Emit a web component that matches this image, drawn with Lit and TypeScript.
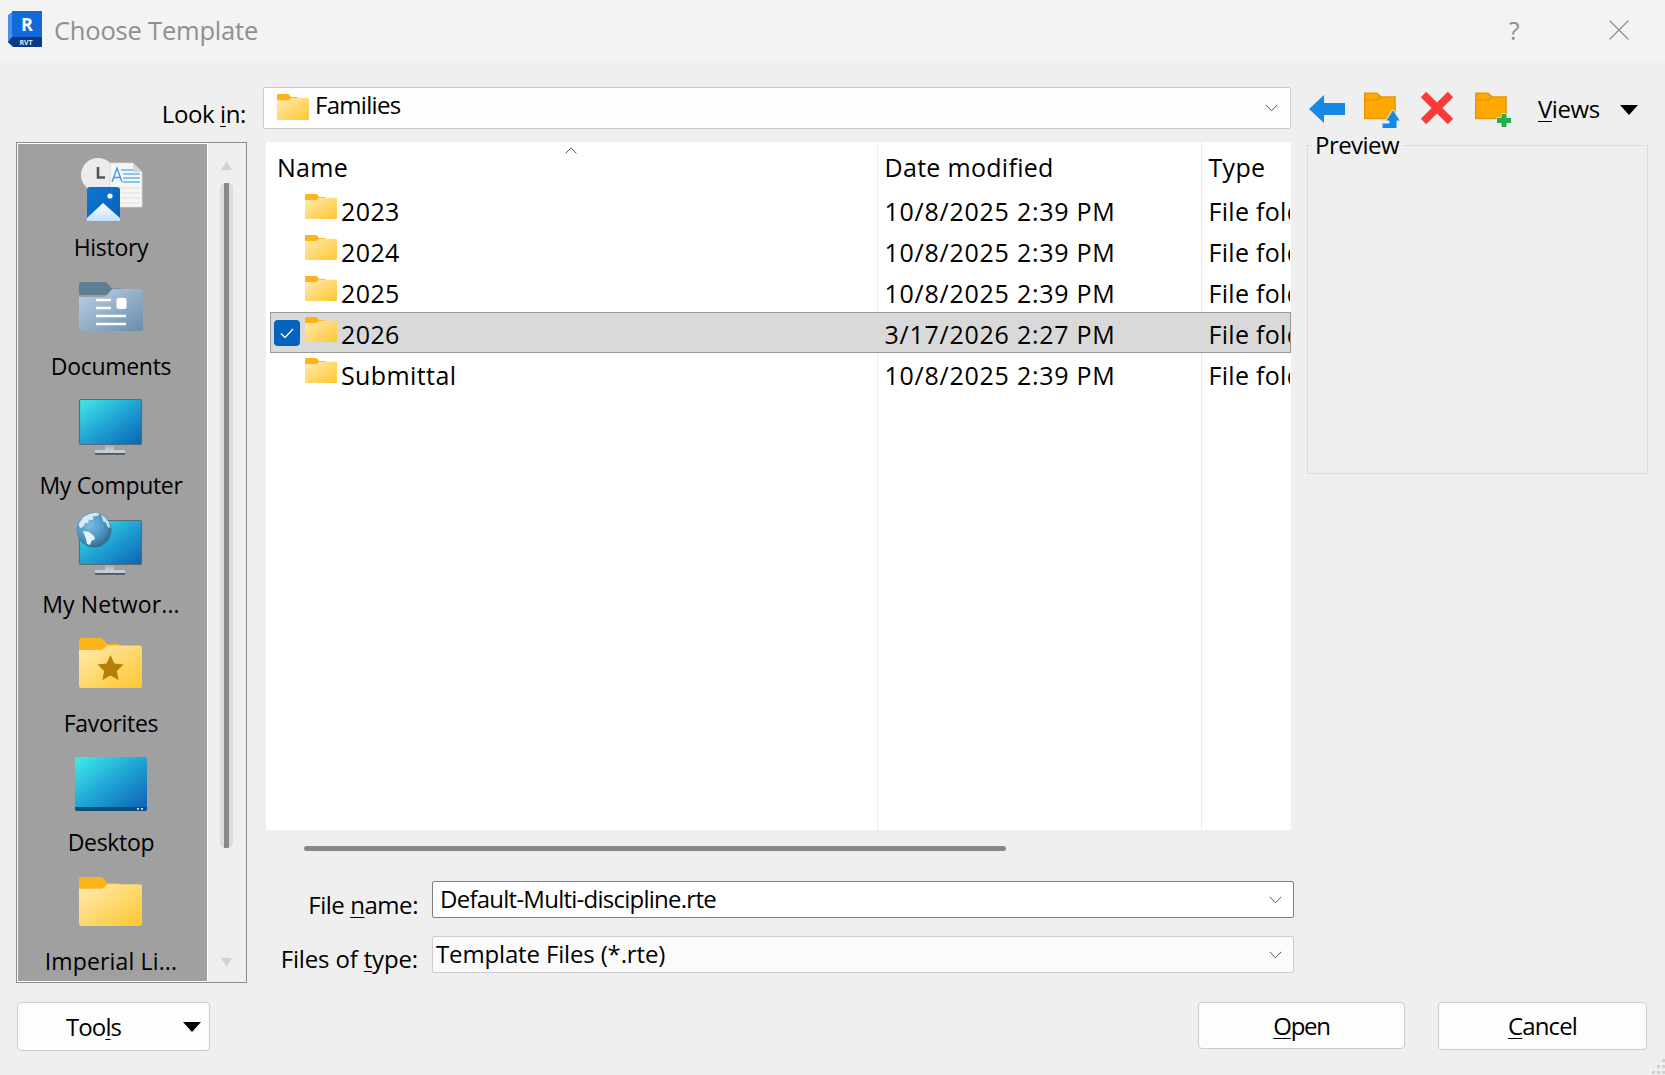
import { LitElement, html, css, svg } from "lit";
import { customElement } from "lit/decorators.js";

const folderShapes = (id: string) => svg`
  <defs>
    <linearGradient id=${id} x1="0" y1="0" x2="1" y2="1">
      <stop offset="0" stop-color="#ffeab0"/><stop offset="1" stop-color="#ffc72f"/>
    </linearGradient>
  </defs>
  <path d="M0 12V2.500A2.500 2.500 0 0 1 2.500 0H21c1.600 0 2.600.7 3.600 1.800L28 6H40V14H0z" fill="#fbb51a"/>
  <path d="M0 12H21.500c1.400 0 2.500-.5 3.300-1.400L28 7.500H60.500A2.500 2.500 0 0 1 63 10V47.500A2.500 2.500 0 0 1 60.500 50H2.500A2.500 2.500 0 0 1 0 47.500z" fill="url(#${id})"/>
`;

const smallFolder = () => html`<svg class="folder" viewBox="0 0 63 50" preserveAspectRatio="none">${folderShapes("fs")}</svg>`;

const historyIcon = svg`
  <defs>
    <linearGradient id="ph" x1="0" y1="0" x2="1" y2="1"><stop offset="0" stop-color="#0a78d6"/><stop offset="1" stop-color="#0a5fb4"/></linearGradient>
    <linearGradient id="mt" x1="0" y1="0" x2="0" y2="1"><stop offset="0" stop-color="#ffffff"/><stop offset="1" stop-color="#bfe1fb"/></linearGradient>
  </defs>
  <circle cx="27" cy="17" r="17" fill="#ececec"/>
  <path d="M27 9v10.500h7" fill="none" stroke="#565656" stroke-width="2.600"/>
  <path d="M39 5H62L71 14V49H39z" fill="#f6f6f6" stroke="#d8d8d8" stroke-width=".8"/>
  <path d="M62 5V14H71z" fill="#d4d4d4"/>
  <path d="M41 24 46 10 51 24M43 19.500H49" fill="none" stroke="#3f9bdf" stroke-width="1.400"/>
  <path d="M50 12H62M52 16H69M52 20H69M52 24H69" stroke="#63b4ec" stroke-width="1.300"/>
  <path d="M50 30H69M50 35H69M50 40H69M50 45H69" stroke="#dedede" stroke-width="1.200"/>
  <rect x="16" y="29" width="33" height="34" rx="3" fill="url(#ph)"/>
  <circle cx="39" cy="38" r="2.600" fill="#fff"/>
  <path d="M16 60 32 45 49 60V63H16z" fill="url(#mt)"/>
`;

const docsIcon = svg`
  <defs><linearGradient id="dc" x1="0" y1="0" x2="1" y2="1"><stop offset="0" stop-color="#bdd2e6"/><stop offset="1" stop-color="#6a8dab"/></linearGradient></defs>
  <path d="M8 14V8a3 3 0 0 1 3-3H33c2 0 3 .8 4 2l4 4.500H50V18H8z" fill="#5f7e93"/>
  <path d="M8 20H32c1.500 0 2.500-.5 3.500-1.500L41 12H69a3 3 0 0 1 3 3V51a3 3 0 0 1-3 3H11a3 3 0 0 1-3-3z" fill="url(#dc)"/>
  <path d="M25 23H40M25 31H40M25 39H55M25 47H55" stroke="#fff" stroke-width="2.400"/>
  <rect x="45.500" y="21" width="10" height="11" rx="2" fill="#fff"/>
`;

const monitor = (id: string, top: number, h: number) => svg`
  <defs>
    <linearGradient id=${id} x1="0" y1="0" x2="1" y2="1"><stop offset="0" stop-color="#41ebea"/><stop offset=".5" stop-color="#1fa3d3"/><stop offset="1" stop-color="#0b63b8"/></linearGradient>
    <linearGradient id="${id}s" x1="0" y1="0" x2="0" y2="1"><stop offset="0" stop-color="#9eaab2"/><stop offset="1" stop-color="#c7d0d6"/></linearGradient>
  </defs>
  <rect x="8.500" y=${top + 0.5} width="62" height=${h} rx="1.500" fill="url(#${id})" stroke="#5a6b78" stroke-width="1.200"/>
  <rect x="34" y=${top + h + 1} width="9" height="5" fill="url(#${id}s)"/>
  <rect x="24" y=${top + h + 6} width="30" height="3" rx="1" fill="#c6ced3"/>
  <rect x="24" y=${top + h + 9} width="30" height="1.800" fill="#4d5963"/>
`;

const computerIcon = monitor("mc", 3, 45);

const networkIcon = svg`
  ${monitor("mn", 5, 44)}
  <defs>
    <radialGradient id="gl" cx=".38" cy=".35" r=".75"><stop offset="0" stop-color="#7cbde6"/><stop offset=".55" stop-color="#4d94bf"/><stop offset="1" stop-color="#27607f"/></radialGradient>
  </defs>
  <circle cx="23" cy="15" r="17.500" fill="url(#gl)"/>
  <path d="M12 2.500C15 0 20-2 25-2.300L29-1 26 1 22 1.500 22 5 18 4.500 17 8 14 8 12 12 9 13 7.500 9z" fill="#e4f2f8" opacity=".9"/>
  <path d="M12 16 18 17 23 21 24 24 20.500 26 19 30 16 29 15 24z" fill="#e7f4f9"/>
  <path d="M30 -.5 34 2 38 7 39.500 13 36.500 12 35 8 32 6z" fill="#cfe6f1" opacity=".9"/>
`;

const favIcon = svg`
  <g transform="translate(8 4)">${folderShapes("ff")}</g>
  <path d="M39.500 21 43.400 29.500 52.500 30.600 45.800 37 47.600 46 39.500 41.500 31.400 46 33.200 37 26.500 30.600 35.600 29.500z" fill="#b57f06"/>
`;

const desktopIcon = svg`
  <defs><linearGradient id="dk" x1="0" y1="0" x2="1" y2="1"><stop offset="0" stop-color="#40edeb"/><stop offset=".5" stop-color="#1fa3d3"/><stop offset="1" stop-color="#0a5fb3"/></linearGradient></defs>
  <rect x="4" y="4" width="72" height="54" rx="2.500" fill="url(#dk)"/>
  <path d="M4 54H76V55.500A2.500 2.500 0 0 1 73.500 58H6.500A2.500 2.500 0 0 1 4 55.500z" fill="#0b4f7f"/>
  <rect x="66" y="55" width="2" height="1.600" fill="#dfe9ef"/><rect x="70" y="55" width="2" height="1.600" fill="#dfe9ef"/>
`;

const impIcon = svg`<g transform="translate(8 5) scale(1 .98)">${folderShapes("fi")}</g>`;

const backIcon = svg`<path d="M2 17 17 3V11H38V23H17V31z" fill="#1689e6"/>`;
const tbFolder = svg`
  <path d="M2.800 1.300H15L19 5H33V26.500H2.800z" fill="#ffa900" stroke="#e8960b" stroke-width="1.600"/>
  <path d="M2.800 8H15L19 5" fill="none" stroke="#e8960b" stroke-width="1.600"/>
`;
const upIcon = svg`${tbFolder}
  <path d="M31 17.500 38.500 29H35V36.500H20V31H27V29H23.500z" fill="#1689e6" stroke="#f0f0f0" stroke-width="1"/>`;
const delIcon = svg`<path d="M8 2 20 14 32 2 38 8 26 20 38 32 32 38 20 26 8 38 2 32 14 20 2 8z" fill="#f93a3a" transform="translate(2 -2) scale(.9)"/>`;
const newIcon = svg`<g transform="translate(1 0)">${tbFolder}</g>
  <path d="M29.500 22H34.500V26H39V31H34.500V35H29.500V31H25V26H29.500z" fill="#25b04e" stroke="#f0f0f0" stroke-width="1" paint-order="stroke"/>`;

const chevron = html`<svg class="chev" viewBox="0 0 13 8"><path d="M.7.8 6.500 6.800 12.300.8" fill="none" stroke="#555" stroke-width="1"/></svg>`;
const tri = html`<svg class="tri" viewBox="0 0 18 10"><path d="M0 0H18L9 10z" fill="#000"/></svg>`;

const places: [string, unknown][] = [
  ["History", historyIcon],
  ["Documents", docsIcon],
  ["My Computer", computerIcon],
  ["My Networ...", networkIcon],
  ["Favorites", favIcon],
  ["Desktop", desktopIcon],
  ["Imperial Li...", impIcon],
];

const files = [
  { n: "2023", d: "10/8/2025 2:39 PM" },
  { n: "2024", d: "10/8/2025 2:39 PM" },
  { n: "2025", d: "10/8/2025 2:39 PM" },
  { n: "2026", d: "3/17/2026 2:27 PM", sel: true },
  { n: "Submittal", d: "10/8/2025 2:39 PM" },
];

@customElement("app-root")
export class AppRoot extends LitElement {
  static styles = css`
    :host {
      display: block; width: 1665px; height: 1075px; position: relative; overflow: hidden;
      background: #efefef; color: #000;
      font-family: "Open Sans", "Noto Sans", sans-serif; font-size: 24px; letter-spacing: -.4px;
    }
    u { text-underline-offset: 3px; text-decoration-thickness: 1px; }
    svg { display: block; flex: none; overflow: visible; }
    .title { height: 62px; background: #f3f3f3; display: flex; align-items: center; padding: 0 36px 0 8px; box-sizing: border-box; }
    .logo { width: 34px; height: 36px; margin: -4px 12px 0 0; }
    .title-text { color: #8f8f8f; flex: 1; font-size: 25.500px; letter-spacing: -.2px; margin-top: -3px; }
    .help { color: #8f8f8f; font-size: 25px; width: 20px; margin-right: 85px; margin-top: -3px; text-align: center; }
    .x { width: 20px; height: 20px; margin-top: -2px; }
    .grid {
      display: grid; grid-template-columns: 231px 1047px 354px; row-gap: 13px;
      grid-template-rows: 42px 841px 48px; padding: 25px 0 0 16px;
    }
    .look { grid-column: 1; grid-row: 1; text-align: right; padding: 9.500px 1px 0 0; line-height: 34px; white-space: nowrap; }
    .combo {
      box-sizing: border-box; background: #fdfdfd; border: 1px solid #cccccc; border-radius: 2px;
      display: flex; align-items: center; white-space: nowrap;
    }
    .lookbox { grid-column: 2; grid-row: 1; margin: 0 3px 0 16px; padding: 0 12px 0 13px; }
    .lookbox .folder { width: 32px; height: 26px; margin: -2px 6px 0 0; }
    .combo.lookbox span { flex: 1; margin-top: -7px; letter-spacing: -.7px; }
    .chev { width: 13px; height: 8px; }
    .right { grid-column: 3; grid-row: 1 / span 2; margin-left: 13px; width: 341px; }
    .tools { display: flex; align-items: center; gap: 15px; height: 36px; margin-top: 5px; }
    .tools svg.t { width: 40px; height: 36px; }
    .views { margin-left: 11px; width: 67px; line-height: 34px; margin-top: -2px; letter-spacing: -.45px; }
    .tri { width: 18px; height: 10px; }
    fieldset {
      margin: 0; padding: 0; box-sizing: border-box; height: 346px; width: 341px; min-width: 0;
      border: 1px solid #dcdcdc;
    }
    legend { padding: 0 3px; margin-left: 4px; line-height: 34px; letter-spacing: -.55px; }
    .side {
      grid-column: 1; grid-row: 2; box-sizing: border-box; border: 1px solid #868c92;
      background: #efefef; display: flex; height: 841px; width: 231px;
    }
    .panel { box-sizing: border-box; width: 191px; background: #a0a0a0; border: 1px solid #fff; padding-top: 14px; overflow: hidden; font-size: 23px; letter-spacing: -.3px; }
    .place { height: 119px; width: 186px; text-align: center; }
    .place svg { width: 80px; height: 64px; margin: 0 auto; }
    .place div { line-height: 34px; margin-top: 8px; white-space: nowrap; }
    .place div.trunc { letter-spacing: .15px; }
    .sb { flex: 1; display: flex; flex-direction: column; align-items: center; padding: 18px 1px 15px 0; }
    .ar { width: 11px; height: 9px; }
    .trk { width: 13px; height: 666px; margin: 13px 0 110px; background: #dcdcdc; border-radius: 5px; display: flex; justify-content: center; overflow: hidden; }
    .trk i { display: block; width: 5px; background: #888; }
    .middle { grid-column: 2; grid-row: 2; display: flex; flex-direction: column; }
    .list {
      height: 688px; margin: 0 3px 0 19px; background-color: #fff; box-sizing: border-box;
      background-image: linear-gradient(#ececec, #ececec), linear-gradient(#ececec, #ececec);
      background-size: 1px 100%; background-position: 611px 0, 935px 0; background-repeat: no-repeat;
      font-size: 25px; letter-spacing: .3px;
    }
    .hdr { height: 47px; display: grid; grid-template-columns: 611px 324px 90px; line-height: 34px; position: relative; }
    .hdr span { padding: 8px 0 0 7.500px; overflow: hidden; white-space: nowrap; }
    .hdr span:first-child { padding-left: 11px; }
    .sort { position: absolute; left: 299px; top: 5px; width: 12px; height: 7px; }
    .row {
      box-sizing: border-box; height: 41px; margin-left: 4px; border: 1px solid transparent;
      display: grid; grid-template-columns: 606px 324px 89px; align-items: center; line-height: 34px;
    }
    .row.sel { background: #d9d9d9; border-color: #999; }
    .row > div { white-space: nowrap; overflow: hidden; padding: 2px 0 0 7.500px; }
    .row > .date { letter-spacing: .75px; }
    .row .name { display: flex; align-items: center; padding: 0 0 0 3px; overflow: visible; height: 39px; }
    .row .name span { padding-top: 2px; letter-spacing: .4px; }
    .row .folder { width: 32px; height: 25px; margin: -6px 4px 0 5px; }
    .chk { width: 26px; height: 26px; flex: none; }
    .hbar { height: 5px; width: 702px; margin: 16px 0 0 57px; background: #888; border-radius: 3px; }
    .field { display: grid; grid-template-columns: 185px 862px; }
    .field label { text-align: right; padding-right: 14px; line-height: 34px; white-space: nowrap; }
    .f1 { margin-top: 30px; }
    .f1 label { padding-top: 7px; letter-spacing: -.45px; }
    .f1 .combo { border-color: #808080; background: #fff; height: 37px; padding: 0 11px 0 7px; letter-spacing: -.75px; }
    .f2 { margin-top: 14px; }
    .f2 label { padding-top: 6px; letter-spacing: -.15px; }
    .f2 .combo { background: #fbfbfb; height: 37px; padding: 0 11px 0 3px; letter-spacing: -.15px; }
    .combo span { flex: 1; margin-top: -3px; }
    .bottom { grid-column: 1 / span 3; grid-row: 3; margin-top: 6px; display: flex; padding: 0 1px; height: 48px; letter-spacing: -.9px; }
    .btn {
      box-sizing: border-box; background: #fdfdfd; border: 1px solid #cccccc; border-radius: 4px;
      display: flex; align-items: center; justify-content: center; line-height: 34px;
    }
    .tool { width: 193px; justify-content: flex-start; padding-left: 48px; height: 49px; }
    .tool .tri { margin-left: 62px; }
    .open { width: 207px; margin-left: auto; height: 47px; letter-spacing: -1.300px; }
    .cancel { width: 209px; margin-left: 33px; height: 48px; }
    .grip { position: absolute; right: 0; bottom: 0; width: 14px; height: 18px; }
  `;

  render() {
    return html`
      <div class="title">
        <svg class="logo" viewBox="0 0 34 36">
          <path d="M0 4 4 1H12V32H0z" fill="#4a8fea"/>
          <path d="M4 0H34V28H4z" fill="#1269d9"/>
          <path d="M0 31 4 26H34V36H5z" fill="#0c3a86"/>
          <text x="19" y="20" font-family="Open Sans" font-size="18" font-weight="700" fill="#fff" text-anchor="middle" letter-spacing="0">R</text>
          <text x="18" y="33.500" font-family="Open Sans" font-size="7" font-weight="700" fill="#d9e6f7" text-anchor="middle" letter-spacing="0">RVT</text>
        </svg>
        <div class="title-text">Choose Template</div>
        <div class="help">?</div>
        <svg class="x" viewBox="0 0 20 20"><path d="M.5.5 19.500 19.500M19.500.5.5 19.500" stroke="#8f8f8f" stroke-width="1.300"/></svg>
      </div>
      <div class="grid">
        <div class="look">Look <u>i</u>n:</div>
        <div class="combo lookbox">${smallFolder()}<span>Families</span>${chevron}</div>
        <div class="right">
          <div class="tools">
            <svg class="t" viewBox="0 0 40 36">${backIcon}</svg>
            <svg class="t" viewBox="0 0 40 36">${upIcon}</svg>
            <svg class="t" viewBox="0 0 40 36">${delIcon}</svg>
            <svg class="t" viewBox="0 0 40 36">${newIcon}</svg>
            <div class="views"><u>V</u>iews</div>
            ${tri}
          </div>
          <fieldset><legend>Preview</legend></fieldset>
        </div>
        <div class="side">
          <div class="panel">
            ${places.map(([label, icon]) => html`
              <div class="place">
                <svg viewBox="0 0 80 64">${icon}</svg>
                <div class=${label.endsWith("...") ? "trunc" : ""}>${label}</div>
              </div>`)}
          </div>
          <div class="sb">
            <svg class="ar" viewBox="0 0 11 9"><path d="M5.500 0 11 9H0z" fill="#d2d2d2"/></svg>
            <div class="trk"><i></i></div>
            <svg class="ar" viewBox="0 0 11 9"><path d="M5.500 9 11 0H0z" fill="#d2d2d2"/></svg>
          </div>
        </div>
        <div class="middle">
          <div class="list">
            <div class="hdr">
              <span>Name</span><span>Date modified</span><span>Type</span>
              <svg class="sort" viewBox="0 0 12 7"><path d="M.5 6.500 6 .8 11.500 6.500" fill="none" stroke="#555" stroke-width="1"/></svg>
            </div>
            ${files.map((f) => html`
              <div class="row ${f.sel ? "sel" : ""}">
                <div class="name">
                  ${f.sel
                    ? html`<svg class="chk" viewBox="0 0 26 26"><rect width="26" height="26" rx="4" fill="#0562bd"/><path d="M7 13.500 11 17.500 19 9" fill="none" stroke="#fff" stroke-width="1.300"/></svg>`
                    : html`<div class="chk"></div>`}
                  ${smallFolder()}
                  <span>${f.n}</span>
                </div>
                <div class="date">${f.d}</div>
                <div>File folder</div>
              </div>`)}
          </div>
          <div class="hbar"></div>
          <div class="field f1">
            <label>File <u>n</u>ame:</label>
            <div class="combo"><span>Default-Multi-discipline.rte</span>${chevron}</div>
          </div>
          <div class="field f2">
            <label>Files of <u>t</u>ype:</label>
            <div class="combo"><span>Template Files (*.rte)</span>${chevron}</div>
          </div>
        </div>
        <div class="bottom">
          <div class="btn tool"><span>Too<u>l</u>s</span>${tri}</div>
          <div class="btn open"><span><u>O</u>pen</span></div>
          <div class="btn cancel"><span><u>C</u>ancel</span></div>
        </div>
      </div>
      <svg class="grip" viewBox="0 0 14 18">
        <g fill="#d0d0d0"><rect x="11" y="2" width="3" height="3"/><rect x="6" y="8" width="3" height="3"/><rect x="11" y="8" width="3" height="3"/><rect x="1" y="14" width="3" height="3"/><rect x="6" y="14" width="3" height="3"/><rect x="11" y="14" width="3" height="3"/></g>
      </svg>
    `;
  }
}
